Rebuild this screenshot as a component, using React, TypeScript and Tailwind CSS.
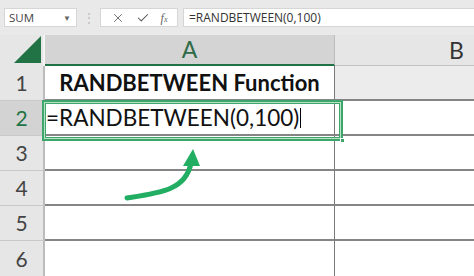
import { X, Check } from 'lucide-react';

const rowNums = [1, 2, 3, 4, 5, 6];

/** 单元格行 */
const Row = ({ n, children, first }: { n: number; children?: React.ReactNode; first?: boolean }) => {
  const active = n === 2;
  return (
    <div className="flex h-[35px] shrink-0">
      <div
        className={`w-[45px] shrink-0 border-r-2 border-[#bcbcbc] ${n < 6 ? 'border-b border-b-[#c9c9c9]' : ''} flex items-center justify-center text-[21px] ${
          active ? 'bg-[#d3d3d3] text-[#217346]' : 'bg-[#e6e6e6] text-[#444]'
        }`}
      >
        {n}
      </div>
      <div className={`w-[290px] shrink-0 border-r border-[#7a7a7a] ${n < 6 ? 'border-b-2 border-b-[#858585]' : ''} flex items-center`}>
        {children}
      </div>
      <div className={`flex-1 ${n < 6 ? 'border-b-2 border-b-[#858585]' : ''} ${first ? 'bg-[#ececec]' : 'bg-white'}`} />
    </div>
  );
};

export default function App() {
  return (
    <div className="relative w-[474px] h-[276px] overflow-hidden bg-white" style={{ fontFamily: 'Lato, "Liberation Sans", sans-serif' }}>
      {/* Toolbar */}
      <div className="h-[35px] bg-[#e9e9e9] flex items-start pt-[8px] pl-[4px] gap-0" style={{ fontFamily: '"Open Sans", "Liberation Sans", sans-serif' }}>
        <div className="w-[73px] h-[19px] bg-white border border-[#d6d6d6] flex items-center justify-between pl-[4px] pr-[5px] text-[11.5px] text-[#444]">
          <span>SUM</span>
          <span className="text-[8px] text-[#666]">▼</span>
        </div>
        <div className="w-[23px] h-[19px] flex items-center justify-center text-[12px] text-[#bdbdbd]">⋮</div>
        <div className="w-[78px] h-[19px] bg-white border border-[#d6d6d6] flex items-center justify-around px-[4px] text-[#555]">
          <X size={14} strokeWidth={1.4} />
          <Check size={14} strokeWidth={1.8} />
          <span className="italic text-[12px] text-[#666]" style={{ fontFamily: '"Liberation Serif", serif' }}>
            f<span className="text-[8px]">x</span>
          </span>
        </div>
        <div className="ml-[5px] flex-1 h-[19px] bg-white border border-[#d6d6d6] border-r-0 flex items-center pl-[5px] text-[12px] text-[#333]">
          =RANDBETWEEN(0,100)
        </div>
      </div>

      {/* 列头 */}
      <div className="flex h-[31px]">
        <div className="w-[45px] shrink-0 bg-[#e6e6e6] border-r-2 border-[#f4f4f4] relative">
          <svg width="28" height="28" className="absolute right-[1px] bottom-[2px]">
            <polygon points="27,0 27,27 0,27" fill="#217346" />
          </svg>
        </div>
        <div className="w-[290px] shrink-0 bg-[#d4d4d4] border-b-2 border-[#217346] border-r border-r-[#bdbdbd] flex items-center justify-center text-[23px] text-[#2e6b46]">
          A
        </div>
        <div className="flex-1 bg-[#e6e6e6] border-b border-[#c4c4c4] flex items-center pl-[114px] text-[23px] text-[#333]">
          B
        </div>
      </div>

      {/* 行 */}
      <Row n={1} first>
        <span className="w-full text-center font-bold text-[22px] text-[#111]">RANDBETWEEN Function</span>
      </Row>
      <Row n={2}>
        <span className="pl-[1px] text-[22.5px] text-[#111] flex items-center">
          =RANDBETWEEN(0,100)
          <span className="inline-block w-[1px] h-[20px] bg-black ml-[1px]" />
        </span>
      </Row>
      {rowNums.slice(2).map((n) => (
        <Row key={n} n={n} />
      ))}

      {/* 选中框 */}
      <div className="absolute left-[42px] top-[100px] w-[301px] h-[41px] border-2 border-[#3fa66b] pointer-events-none">
        <div className="w-full h-full border border-[#b7e2c6]">
          <div className="w-full h-full border border-[#3fa66b]" />
        </div>
        <div className="absolute right-[-4px] bottom-[-4px] w-[5px] h-[5px] bg-[#3fa66b] border border-white" />
      </div>

      {/* 箭头 */}
      <svg className="absolute left-0 top-0 pointer-events-none" width="474" height="276">
        <path d="M127 198 C 160 193, 186 190, 191 163" stroke="#21ad62" strokeWidth="5" fill="none" strokeLinecap="round" />
        <polygon points="183,166 200,166 193,149" fill="#21ad62" />
      </svg>
    </div>
  );
}
